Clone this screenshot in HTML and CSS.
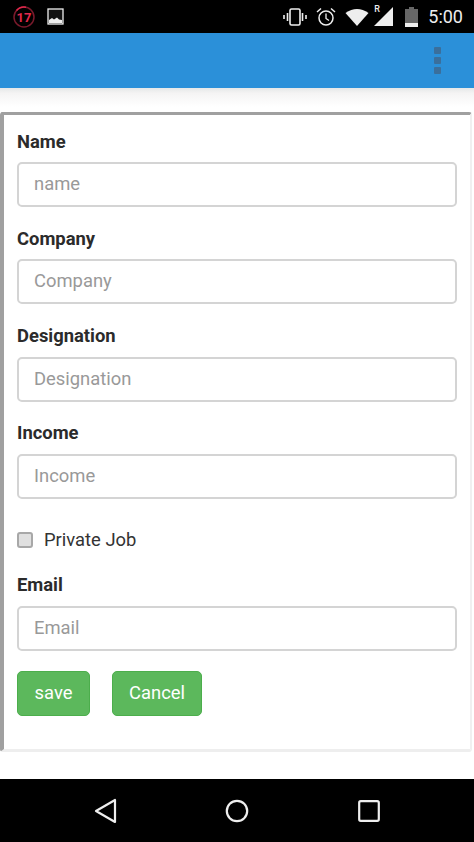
FILE: index.html
```html
<!DOCTYPE html>
<html lang="en">
<head>
    <meta charset="UTF-8">
    <meta name="viewport" content="width=device-width, initial-scale=1.0">
    <title>Details Form</title>
    <link rel="stylesheet" href="styles.css">
</head>
<body>
    <!-- Status bar -->
    <div class="status-bar">
        <div class="status-left">
            <svg class="notif-17" width="24" height="24" viewBox="0 0 24 24">
                <circle cx="12" cy="12" r="10" fill="none" stroke="#7a1a2c" stroke-width="1.5"/>
                <path d="M4.5 5.5A10 10 0 0 1 14 2.2" fill="none" stroke="#e0284c" stroke-width="1.5"/>
                <text x="12" y="16.5" text-anchor="middle" class="notif-num">17</text>
            </svg>
            <svg width="17" height="17" viewBox="0 0 17 17">
                <rect x="1" y="1" width="15" height="15" fill="#111" stroke="#eee" stroke-width="1.3"/>
                <path d="M2 15V12L5 10L7 11.5L10 9.5L12 11.5L15 12V15Z" fill="#eee"/>
            </svg>
        </div>
        <div class="status-right">
            <svg width="24" height="20" viewBox="0 0 24 20">
                <rect x="7" y="2" width="10" height="16" rx="1.5" fill="none" stroke="#eee" stroke-width="1.6"/>
                <path d="M4.5 6V14M19.5 6V14" stroke="#eee" stroke-width="1.6"/>
                <path d="M1 8V12M23 8V12" stroke="#eee" stroke-width="1.6"/>
            </svg>
            <svg class="alarm" width="20" height="20" viewBox="0 0 20 20">
                <circle cx="10" cy="11" r="7" fill="none" stroke="#eee" stroke-width="1.5"/>
                <path d="M10 6.5V11.5L13 13.5" fill="none" stroke="#eee" stroke-width="1.3"/>
                <path d="M1 5L5 1.5M19 5L15 1.5" stroke="#eee" stroke-width="1.5"/>
            </svg>
            <svg class="wifi" width="24" height="18" viewBox="0 0 24 18">
                <path d="M0.5 5Q12 -3 23.5 5L12 18Z" fill="#eee"/>
            </svg>
            <div class="signal">
                <span class="roaming">R</span>
                <svg width="19" height="19" viewBox="0 0 19 19">
                    <path d="M0 19L19 0V19Z" fill="#eee"/>
                </svg>
            </div>
            <svg class="battery" width="13" height="20" viewBox="0 0 13 20">
                <path d="M4 0H9V2H13V20H0V2H4Z" fill="#666"/>
                <rect y="16" width="13" height="4" fill="#eee"/>
            </svg>
            <span class="clock">5:00</span>
        </div>
    </div>

    <!-- App bar -->
    <div class="app-bar">
        <div class="menu-dots">
            <span></span>
            <span></span>
            <span></span>
        </div>
    </div>
    <div class="app-bar-shade"></div>

    <!-- Form -->
    <div class="card">
        <div class="form-group">
            <label for="name">Name</label>
            <input type="text" id="name" placeholder="name">
        </div>
        <div class="form-group">
            <label for="company">Company</label>
            <input type="text" id="company" placeholder="Company">
        </div>
        <div class="form-group">
            <label for="designation">Designation</label>
            <input type="text" id="designation" placeholder="Designation">
        </div>
        <div class="form-group">
            <label for="income">Income</label>
            <input type="text" id="income" placeholder="Income">
        </div>
        <div class="check-row">
            <span class="check-box"></span>
            <span>Private Job</span>
        </div>
        <div class="form-group form-group-last">
            <label for="email">Email</label>
            <input type="text" id="email" placeholder="Email">
        </div>
        <div class="buttons">
            <button class="save-btn">save</button>
            <button class="cancel-btn">Cancel</button>
        </div>
    </div>

    <!-- Navigation bar -->
    <div class="nav-bar">
        <svg width="24" height="26" viewBox="0 0 24 26">
            <path d="M22 2V24L3 13Z" fill="none" stroke="#eee" stroke-width="2.2" stroke-linejoin="round"/>
        </svg>
        <svg width="24" height="24" viewBox="0 0 24 24">
            <circle cx="12" cy="12" r="10.2" fill="none" stroke="#eee" stroke-width="2.2"/>
        </svg>
        <svg width="24" height="24" viewBox="0 0 24 24">
            <rect x="2.2" y="2.2" width="19.6" height="19.6" rx="1.5" fill="none" stroke="#eee" stroke-width="2.2"/>
        </svg>
    </div>
</body>
</html>
```

FILE: styles.css
```css
body {
    margin: 0;
    width: 474px;
    height: 842px;
    overflow: hidden;
    background-color: #fff;
    font-family: Roboto, "Liberation Sans", sans-serif;
    color: #2b2b2b;
}
.status-bar {
    height: 33px;
    background-color: #000;
    display: flex;
    justify-content: space-between;
    align-items: center;
    padding: 0 11px 0 12px;
    box-sizing: border-box;
}
.status-left {
    display: flex;
    align-items: center;
    gap: 11px;
}
.notif-num {
    font-size: 13px;
    font-weight: 700;
    fill: #e0284c;
}
.status-right {
    display: flex;
    align-items: center;
}
.alarm {
    margin-left: 9px;
}
.wifi {
    margin-left: 9px;
}
.signal {
    position: relative;
    margin-left: 3px;
    height: 19px;
    padding-left: 2px;
}
.roaming {
    position: absolute;
    left: 2px;
    top: -3px;
    font-size: 9px;
    font-weight: 500;
    color: #eee;
}
.battery {
    margin-left: 12px;
}
.clock {
    margin-left: 10px;
    font-size: 18px;
    color: #eee;
}
.app-bar {
    height: 55px;
    background-color: #2b90d9;
    display: flex;
    justify-content: flex-end;
    align-items: center;
    padding-right: 33px;
}
.menu-dots {
    display: flex;
    flex-direction: column;
    gap: 3px;
}
.menu-dots span {
    width: 7px;
    height: 7px;
    border-radius: 1px;
    background-color: #3a6f9c;
}
.app-bar-shade {
    height: 22px;
    margin-bottom: 2px;
    background: linear-gradient(#e6e8e8, #f5f4f4 25%, #fff 85%);
}
.card {
    width: 472px;
    height: 640px;
    box-sizing: border-box;
    padding: 15.5px 13px 0 13px;
    border-top: 3px solid #a0a0a0;
    border-left: 4px solid #a0a0a0;
    border-right: 2px solid #f0f0f0;
    border-bottom: 3px solid #eeeeee;
    border-radius: 3px;
}
.form-group {
    margin-bottom: 20.8px;
}
.form-group-last {
    margin-bottom: 20px;
}
label {
    display: block;
    margin-bottom: 10.5px;
    font-size: 18.4px;
    line-height: 21px;
    font-weight: 700;
}
input[type="text"] {
    display: block;
    width: 100%;
    height: 45px;
    box-sizing: border-box;
    padding: 0 15px 2px;
    border: 2px solid #d4d4d4;
    border-radius: 5px;
    font-family: inherit;
    font-size: 18.4px;
    color: #555;
}
input::placeholder {
    color: #999;
    opacity: 1;
}
.check-row {
    display: flex;
    align-items: center;
    gap: 11px;
    height: 24px;
    margin-top: 29px;
    margin-bottom: 22.6px;
    font-size: 18.4px;
}
.check-row span:last-child {
    color: #333;
}
.check-box {
    width: 16px;
    height: 16px;
    box-sizing: border-box;
    background-color: #e0e0e0;
    border: 2px solid #a8a8a8;
    border-radius: 3px;
}
.buttons {
    display: flex;
    gap: 22px;
}
button {
    height: 45px;
    padding: 0 0 2px;
    background-color: #5cb85c;
    border: 1px solid #4cae4c;
    border-radius: 5px;
    color: #fff;
    font-family: inherit;
    font-size: 18.4px;
}
.save-btn {
    width: 73px;
}
.cancel-btn {
    width: 90px;
}
.nav-bar {
    position: absolute;
    left: 0;
    right: 0;
    bottom: 0;
    height: 63px;
    background-color: #000;
    display: flex;
    align-items: center;
    padding-left: 93px;
    gap: 108px;
}
```
